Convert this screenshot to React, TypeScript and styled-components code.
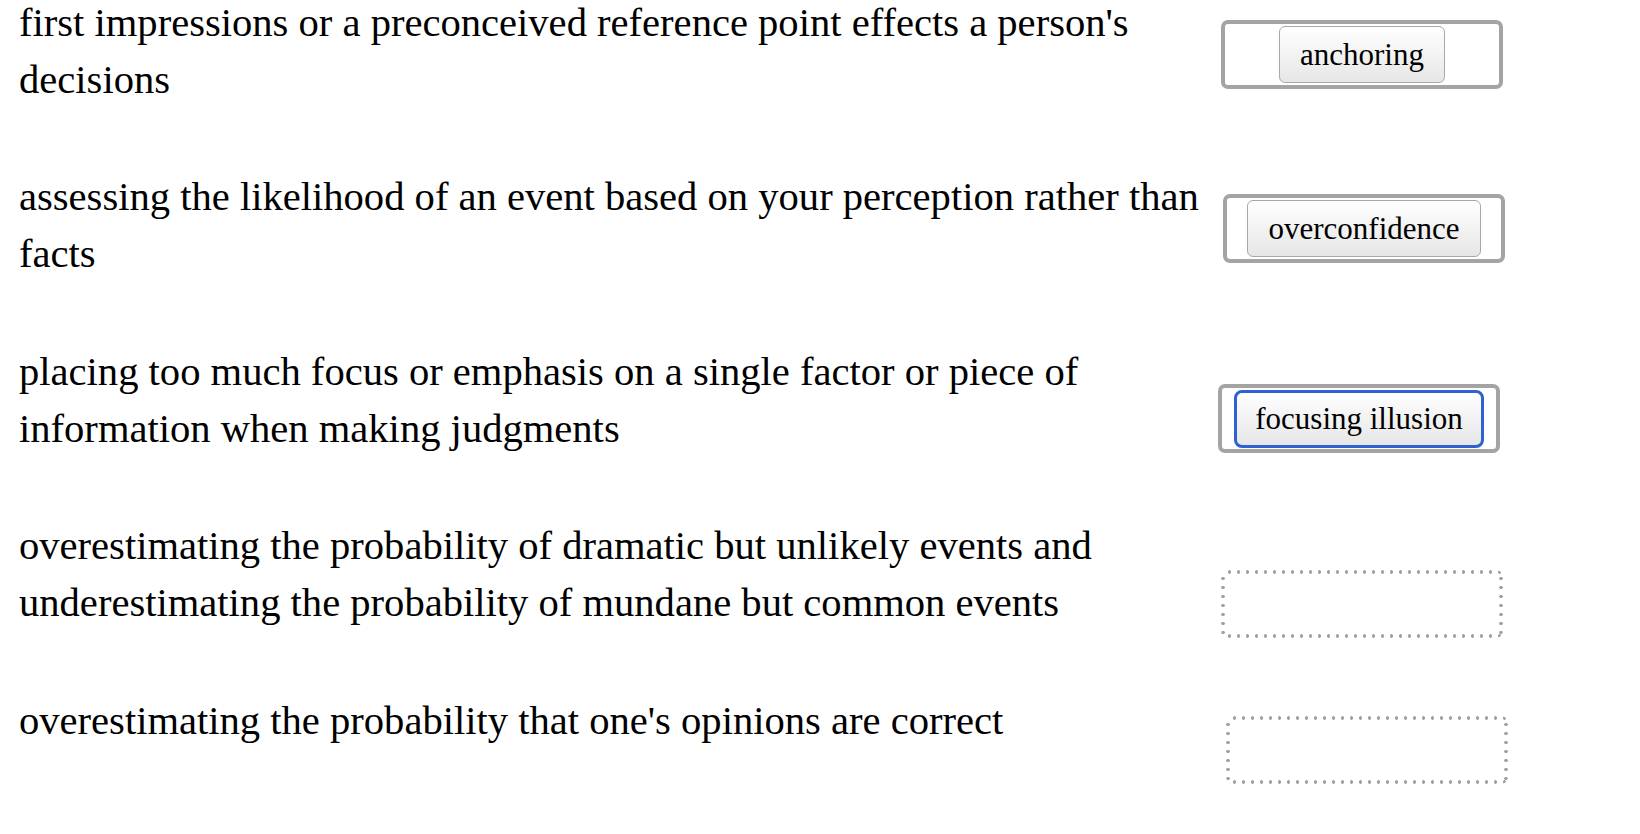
import { FC } from 'react'
import styled, { createGlobalStyle } from 'styled-components'

type Item = {
    prompt: string
    answer?: string
    focused?: boolean
    dx: number
    dy: number
}

const items: Item[] = [
    { prompt: "first impressions or a preconceived reference point effects a person's decisions", answer: 'anchoring', dx: 7, dy: 26.5 },
    { prompt: 'assessing the likelihood of an event based on your perception rather than facts', answer: 'overconfidence', dx: 9, dy: 26 },
    { prompt: 'placing too much focus or emphasis on a single factor or piece of information when making judgments', answer: 'focusing illusion', focused: true, dx: 4, dy: 41.5 },
    { prompt: 'overestimating the probability of dramatic but unlikely events and underestimating the probability of mundane but common events', dx: 7, dy: 53 },
    { prompt: "overestimating the probability that one's opinions are correct", dx: 12, dy: 24.5 },
]

const App: FC = () => {
    return (
        <>
            <GlobalStyle />
            <SList>
                {items.map((item) => (
                    <SRow key={item.prompt}>
                        <SPrompt>{item.prompt}</SPrompt>
                        {item.answer ? (
                            <SDrop $dx={item.dx} $dy={item.dy}>
                                <SChip $focused={item.focused}>{item.answer}</SChip>
                            </SDrop>
                        ) : (
                            <SEmptyDrop $dx={item.dx} $dy={item.dy} />
                        )}
                    </SRow>
                ))}
            </SList>
        </>
    )
}

export default App

const GlobalStyle = createGlobalStyle`
    html, body {
        margin: 0;
        background: #fff;
        color: #000;
        font-family: "Liberation Serif", "Times New Roman", serif;
    }
`
const SList = styled.div`
    margin-top: -6.5px;
    padding-left: 19px;
`
const SRow = styled.div`
    display: grid;
    grid-template-columns: 1195px 282px;
    align-items: start;
    height: 174.5px;
`
const SPrompt = styled.p`
    margin: 0;
    font-size: 40.6px;
    line-height: 57px;
`
const SDrop = styled.div<{ $dx: number; $dy: number }>`
    box-sizing: border-box;
    width: 282px;
    height: 69px;
    margin: ${(p) => p.$dy}px 0 0 ${(p) => p.$dx}px;
    border: 4px solid #a4a4a4;
    border-radius: 7px;
    display: flex;
    align-items: center;
    justify-content: center;
`
const SEmptyDrop = styled.div<{ $dx: number; $dy: number }>`
    box-sizing: border-box;
    width: 282px;
    height: 68px;
    margin: ${(p) => p.$dy}px 0 0 ${(p) => p.$dx}px;
    border-radius: 7px;
    background:
        radial-gradient(circle, #a2a2a2 1.5px, transparent 2px) 4px 0 / 9px 4px repeat-x,
        radial-gradient(circle, #a2a2a2 1.5px, transparent 2px) 4px 100% / 9px 4px repeat-x,
        radial-gradient(circle, #a2a2a2 1.5px, transparent 2px) 0 4px / 4px 9px repeat-y,
        radial-gradient(circle, #a2a2a2 1.5px, transparent 2px) 100% 4px / 4px 9px repeat-y;
`
const SChip = styled.div<{ $focused?: boolean }>`
    box-sizing: border-box;
    height: ${(p) => (p.$focused ? '58px' : '57px')};
    padding: 0 ${(p) => (p.$focused ? '18px' : '20px')};
    display: flex;
    align-items: center;
    font-size: 31px;
    white-space: nowrap;
    background: linear-gradient(#ffffff, #e6e6e6);
    border: ${(p) => (p.$focused ? '3px solid #2c63d1' : '1px solid #a9a9a9')};
    border-radius: ${(p) => (p.$focused ? '8px' : '6px')};
`
